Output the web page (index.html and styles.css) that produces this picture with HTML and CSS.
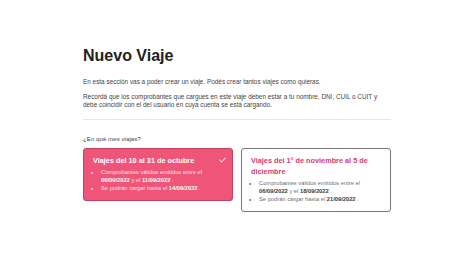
FILE: index.html
```html
<!DOCTYPE html>
<html lang="es">
<head>
<meta charset="utf-8">
<title>Nuevo Viaje</title>
<link rel="stylesheet" href="styles.css">
</head>
<body>
<main class="page">
  <h1 class="title">Nuevo Viaje</h1>
  <p class="intro">En esta sección vas a poder crear un viaje. Podés crear tantos viajes como quieras.</p>
  <p class="intro">Recordá que los comprobantes que cargues en este viaje deben estar a tu nombre, DNI, CUIL o CUIT y debe coincidir con el del usuario en cuya cuenta se está cargando.</p>
  <hr class="divider">
  <p class="question">¿En qué mes viajas?</p>
  <div class="options">
    <div class="card card--selected">
      <div class="card-head">
        <h2 class="card-title">Viajes del 10 al 31 de octubre</h2>
        <svg class="check" viewBox="0 0 10 8" width="7" height="6"><path d="M1 4.2 L3.8 6.8 L9 1" fill="none" stroke="#fff" stroke-width="1.4" stroke-linecap="round" stroke-linejoin="round"/></svg>
      </div>
      <ul class="card-list">
        <li>Comprobantes válidos emitidos entre el <b>06/09/2022</b> y el <b>11/09/2022</b> .</li>
        <li>Se podrán cargar hasta el <b>14/09/2022</b> .</li>
      </ul>
    </div>
    <div class="card">
      <div class="card-head">
        <h2 class="card-title">Viajes del 1° de noviembre al 5 de diciembre</h2>
      </div>
      <ul class="card-list">
        <li>Comprobantes válidos emitidos entre el <b>06/09/2022</b> y el <b>18/09/2022</b> .</li>
        <li>Se podrán cargar hasta el <b>21/09/2022</b> .</li>
      </ul>
    </div>
  </div>
</main>
</body>
</html>
```

FILE: styles.css
```css
html, body {
  margin: 0;
  padding: 0;
  background: #ffffff;
}
body {
  font-family: "Liberation Sans", Arial, sans-serif;
  color: #333333;
}
.page {
  width: 308px;
  margin: 0 auto;
  padding-top: 46px;
}
.title {
  margin: 0 0 12px;
  font-size: 16px;
  line-height: 20px;
  font-weight: bold;
  color: #222222;
}
.intro {
  margin: 0 0 6.5px;
  font-size: 6.4px;
  line-height: 8px;
  color: #444444;
}
.divider {
  border: 0;
  border-top: 1px solid #e6e6e6;
  margin: 10px 0 15px;
}
.question {
  margin: 0 0 5px;
  font-size: 6.2px;
  line-height: 8px;
  color: #444444;
}
.options {
  display: flex;
  gap: 8px;
  align-items: flex-start;
}
.card {
  flex: 1;
  box-sizing: border-box;
  border: 1px solid #777777;
  border-radius: 3px;
  padding: 6px 9px 8px;
  background: #ffffff;
}
.card--selected {
  background: #ef5578;
  border-color: #c7405e;
}
.card-head {
  display: flex;
  justify-content: space-between;
  align-items: flex-start;
}
.card-title {
  margin: 0;
  font-size: 7.3px;
  line-height: 11px;
  font-weight: bold;
  color: #d83a72;
}
.card--selected .card-title {
  color: #ffffff;
}
.check {
  flex: none;
  margin-top: 2px;
  margin-right: -3px;
}
.card-list {
  margin: 2px 0 0;
  padding-left: 8px;
  font-size: 5.75px;
  line-height: 8px;
  color: #6f6f6f;
}
.card-list b {
  color: #3a3a3a;
}
.card--selected .card-list {
  color: #ffe0e8;
}
.card--selected .card-list b {
  color: #ffffff;
}
```
